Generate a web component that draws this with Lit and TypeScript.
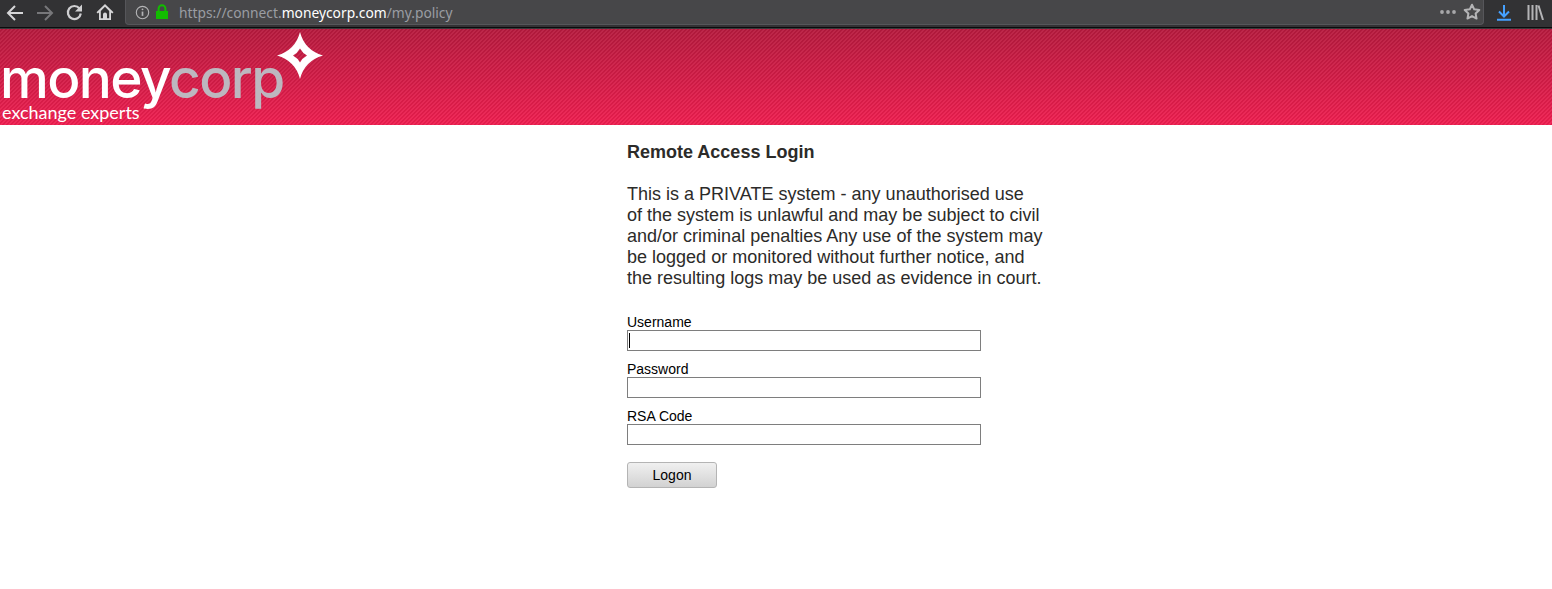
import { LitElement, html, css, svg } from "lit";
import { customElement } from "lit/decorators.js";

@customElement("app-root")
export class AppRoot extends LitElement {
  static styles = css`
    :host { display: block; width: 100%; min-height: 589px; background: #fff; font-family: "Liberation Sans", Arial, sans-serif; overflow: hidden; }
    .toolbar { height: 27px; box-sizing: border-box; background: #323234; display: flex; align-items: flex-start; }
    .navs { width: 125px; height: 25px; display: flex; flex: none; }
    .ic { flex: none; display: block; }
    .nav1 { margin-left: 5px; margin-top: 3px; }
    .nav2 { margin-left: 10px; margin-top: 3px; }
    .nav3 { margin-left: 9px; margin-top: 2px; }
    .nav4 { margin-left: 11px; margin-top: 2px; }
    .urlbar { width: 1359px; height: 25px; box-sizing: border-box; flex: none; background: #474749; border: 1px solid #56565a; border-top: 0; border-radius: 0 0 4px 4px; display: flex; align-items: center; padding-left: 9px; }
    .lock { margin-left: 5px; }
    .url { margin-left: 10px; font: 13.8px "Noto Sans", "Open Sans", sans-serif; color: #9a9da3; white-space: nowrap; }
    .url b { font-weight: 400; color: #fff; }
    .spacer { flex: 1; }
    .bm { margin-left: 7px; margin-right: 2px; }
    .right { flex: 1; display: flex; }
    .dl { margin-left: 13px; margin-top: 4px; }
    .lib { margin-left: 16px; margin-top: 5px; }
    .sep { height: 1px; background: #0c0c0d; }
    .sep2 { height: 1px; background: #38383a; }
    .banner { height: 96px; background:
        repeating-linear-gradient(135deg, rgba(255,255,255,.055) 0 1.414px, rgba(0,0,0,.05) 1.414px 2.828px),
        linear-gradient(180deg, #b71a3e 0%, #f01e50 100%);
      display: flex; }
    .logo { width: 330px; height: 96px; position: relative; flex: none; }
    .word { position: absolute; left: 0; top: 25px; font: 500 55px/48px Inter, sans-serif; letter-spacing: -1.6px; color: #fff; white-space: nowrap; }
    .word span { color: #bdb7bf; }
    .tag { position: absolute; left: 2px; top: 74px; font: 400 18px/18px Lato, sans-serif; color: #fff; white-space: nowrap; }
    .star { position: absolute; left: 276px; top: 3px; }
    .main { margin-left: 627px; width: 420px; padding-top: 17px; color: #2c2b29; }
    h1 { margin: 0; font-size: 18px; line-height: 21px; font-weight: 700; }
    p { margin: 21px 0 0; font-size: 18.02px; line-height: 21px; }
    form { margin-top: 25px; color: #000; font-size: 14px; }
    .field { display: flex; flex-direction: column; margin-bottom: 10px; position: relative; }
    label { line-height: 16px; height: 16px; }
    input { display: block; width: 354px; height: 21px; box-sizing: border-box; border: 1px solid #7e7e7e; background: #fff; margin: 0; padding: 0; outline: none; }
    .caret { position: absolute; left: 2px; top: 19px; width: 1px; height: 15px; background: #000; }
    button { display: block; margin-top: 17px; width: 90px; height: 26px; box-sizing: border-box; border: 1px solid #b4b4b4; border-radius: 3px; background: linear-gradient(180deg, #f0f0f0, #d2d2d2); font: 14px "Liberation Sans", Arial, sans-serif; color: #000; padding: 0; }
  `;

  render() {
    return html`
      <div class="toolbar">
        <div class="navs">
          <svg class="ic nav1" width="20" height="20" viewBox="0 0 20 20" fill="none" stroke="#d6d6d8" stroke-width="2"><path d="M18 10H4M10 3l-7 7 7 7"/></svg>
          <svg class="ic nav2" width="20" height="20" viewBox="0 0 20 20" fill="none" stroke="#77777a" stroke-width="2"><path d="M2 10h14M10 3l7 7-7 7"/></svg>
          <svg class="ic nav3" width="20" height="20" viewBox="0 0 20 20" fill="none" stroke="#cfcfd1" stroke-width="2.2"><path d="M15.5 6.5a6.5 6.5 0 1 0 1.3 5"/><path d="M18 2.5v7h-7z" fill="#cfcfd1" stroke="none"/></svg>
          <svg class="ic nav4" width="20" height="20" viewBox="0 0 20 20"><path fill="#d6d6d8" fill-rule="evenodd" d="M10 2L18.5 10.2 17.2 11.6 16 10.5V18H4V10.5L2.8 11.6 1.5 10.2ZM10 4.8L5.8 8.9V16.2H8V12.5a2 2 0 0 1 4 0V16.2H14.2V8.9Z"/></svg>
        </div>
        <div class="urlbar">
          <svg class="ic" width="15" height="15" viewBox="0 0 16 16" fill="none" stroke="#b4b4b6" stroke-width="1.2"><circle cx="8" cy="8" r="6.6"/><path d="M8 7v4.6" stroke-width="1.8"/><circle cx="8" cy="4.6" r="1" fill="#b4b4b6" stroke="none"/></svg>
          <svg class="ic lock" width="14" height="16" viewBox="0 0 14 16"><path d="M1 7h12v8H1z" fill="#12bc00"/><path d="M3.6 7V4.6a3.4 3.4 0 0 1 6.8 0V7" fill="none" stroke="#12bc00" stroke-width="2"/></svg>
          <div class="url">https://connect.<b>moneycorp.com</b>/my.policy</div>
          <div class="spacer"></div>
          <svg class="ic" width="16" height="4" viewBox="0 0 16 4" fill="#a8a8aa"><circle cx="2" cy="2" r="1.9"/><circle cx="8" cy="2" r="1.9"/><circle cx="14" cy="2" r="1.9"/></svg>
          <svg class="ic bm" width="18" height="18" viewBox="0 0 17 17" fill="none" stroke="#b4b4b6" stroke-width="1.9" stroke-linejoin="round"><path d="M8.5 1.6l2.1 4.4 4.8.6-3.5 3.3.9 4.8-4.3-2.4-4.3 2.4.9-4.8L1.6 6.6l4.8-.6z"/></svg>
        </div>
        <div class="right">
          <svg class="ic dl" width="14" height="17" viewBox="0 0 14 17" fill="none" stroke="#45a1ff" stroke-width="2"><path d="M7 1v11M2 7.5L7 12.5l5-5M0 15.8h14"/></svg>
          <svg class="ic lib" width="17" height="15" viewBox="0 0 17 15" fill="none" stroke="#b4b4b6" stroke-width="2"><path d="M1.5 0v15M5.5 0v15M9.5 0v15M11.5 .5l4.5 14.5"/></svg>
        </div>
      </div>
      <div class="sep"></div>
      <div class="sep2"></div>
      <div class="banner">
        <div class="logo">
          <div class="word">money<span>corp</span></div>
          <div class="tag">exchange experts</div>
          <svg class="star" width="48" height="48" viewBox="0 0 48 48">
            ${svg`<path fill-rule="evenodd" fill="#fff" d="M24 0Q28.5 18 47 23.5Q28.5 29 24 47Q19.5 29 1 23.5Q19.5 18 24 0ZM24 16.5Q21.5 21 17 23.5Q21.5 26 24 30.5Q26.5 26 31 23.5Q26.5 21 24 16.5Z"/>`}
          </svg>
        </div>
      </div>
      <div class="main">
        <h1>Remote Access Login</h1>
        <p>This is a PRIVATE system - any unauthorised use<br>of the system is unlawful and may be subject to civil<br>and/or criminal penalties Any use of the system may<br>be logged or monitored without further notice, and<br>the resulting logs may be used as evidence in court.</p>
        <form>
          <div class="field"><label>Username</label><input type="text"><span class="caret"></span></div>
          <div class="field"><label>Password</label><input type="password"></div>
          <div class="field"><label>RSA Code</label><input type="text"></div>
          <button type="button">Logon</button>
        </form>
      </div>
    `;
  }
}
